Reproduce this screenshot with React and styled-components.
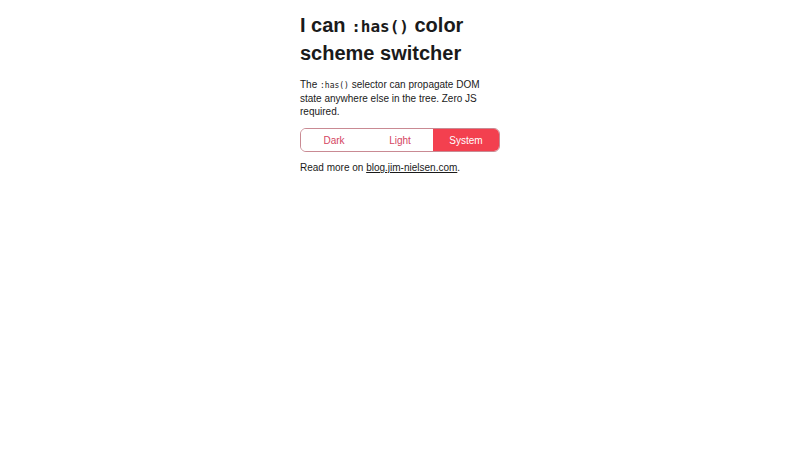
import React, { useState } from "react";
import styled, { createGlobalStyle } from "styled-components";

const GlobalStyle = createGlobalStyle`
  html, body {
    margin: 0;
    background: #fff;
    color: #1a1a1a;
    font-family: "Liberation Sans", Arial, sans-serif;
  }
`;

const Main = styled.main`
  width: 200px;
  margin: 0 auto;
  padding-top: 12px;
`;

const Title = styled.h1`
  font-size: 20px;
  line-height: 27px;
  font-weight: 700;
  margin: 0 0 11px;

  code {
    font-family: "DejaVu Sans Mono", monospace;
    font-size: 16px;
  }
`;

const Text = styled.p`
  font-size: 10px;
  line-height: 13px;
  margin: 0 0 10px;

  code {
    font-family: "DejaVu Sans Mono", monospace;
    font-size: 8px;
  }

  a {
    color: inherit;
  }
`;

const Switcher = styled.div`
  display: flex;
  border: 1px solid #c98a93;
  border-radius: 6px;
  overflow: hidden;
  margin-bottom: 9px;
`;

const Option = styled.button`
  flex: 1;
  height: 22px;
  border: 0;
  padding: 0;
  font-family: "Liberation Sans", Arial, sans-serif;
  font-size: 10px;
  cursor: pointer;
  background: ${(p) => (p.$active ? "#f3404f" : "#fff")};
  color: ${(p) => (p.$active ? "#fff" : "#d4455f")};
`;

const options = ["Dark", "Light", "System"];

export default function App() {
  const [scheme, setScheme] = useState("System");

  return (
    <>
      <GlobalStyle />
      <Main>
        <Title>
          I can <code>:has()</code> color scheme switcher
        </Title>
        <Text>
          The <code>:has()</code> selector can propagate DOM state anywhere
          else in the tree. Zero JS required.
        </Text>
        <Switcher>
          {options.map((o) => (
            <Option key={o} $active={scheme === o} onClick={() => setScheme(o)}>
              {o}
            </Option>
          ))}
        </Switcher>
        <Text>
          Read more on <a href="#">blog.jim-nielsen.com</a>.
        </Text>
      </Main>
    </>
  );
}
